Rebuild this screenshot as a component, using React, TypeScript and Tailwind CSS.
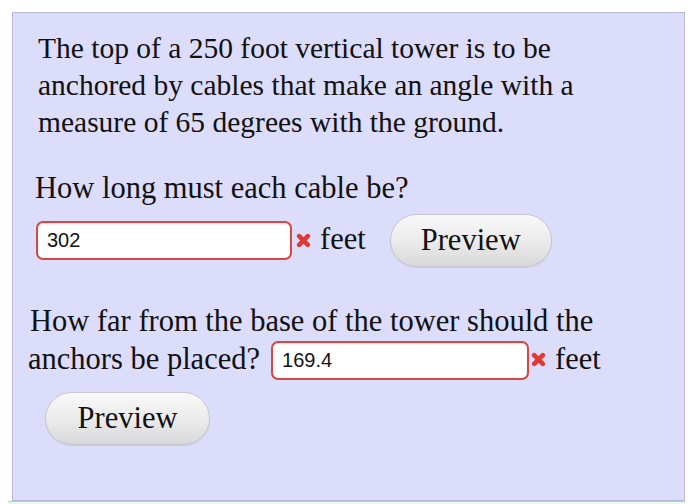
const serif = "font-['Liberation_Serif','Times_New_Roman',serif]";

function CrossMark() {
  return (
    <svg width="15" height="15" viewBox="0 0 15 15" className="shrink-0">
      <path d="M3.2 3.2 L11.8 11.8 M11.8 3.2 L3.2 11.8" stroke="#dc3a34" strokeWidth="4.6" strokeLinecap="round" />
    </svg>
  );
}

function AnswerBox({ value, width }: { value: string; width: string }) {
  return (
    <input
      readOnly
      value={value}
      className={`${width} h-[39px] rounded-[7px] border-2 border-[#d24a44] bg-white pl-[9px] font-['Liberation_Sans',Arial,sans-serif] text-[20px] text-[#111] outline-none shadow-[inset_0_1px_2px_rgba(0,0,0,0.12)]`}
    />
  );
}

function PreviewButton({ width }: { width: string }) {
  return (
    <button
      className={`${width} h-[53px] rounded-full border border-[#c6c6cc] bg-gradient-to-b from-[#f8f8f8] via-[#ececec] to-[#d8d8da] ${serif} text-[30.5px] leading-none text-[#111] shadow-[0_1px_1px_rgba(0,0,0,0.08)]`}
    >
      Preview
    </button>
  );
}

export default function App() {
  return (
    <div className="min-h-[504px] w-[700px] overflow-hidden bg-white">
      <div className="ml-[12px] mt-[12px] h-[489px] w-[673px] border border-[#babad8] bg-[#dcdcfb] text-[#111]">
        <div className={`${serif} text-[30.5px] leading-[37px]`}>
          <p className="ml-[25px] mt-[17px] text-[29.5px]">
            The top of a 250 foot vertical tower is to be
            <br />
            anchored by cables that make an angle with a
            <br />
            measure of 65 degrees with the ground.
          </p>

          <p className="ml-[22px] mt-[29px]">How long must each cable be?</p>

          <div className="ml-[23px] mt-[7px] flex h-[53px] items-center">
            <AnswerBox value="302" width="w-[256px]" />
            <div className="ml-[4px]">
              <CrossMark />
            </div>
            <span className="ml-[9px] -mt-[2px]">feet</span>
            <div className="ml-[24px]">
              <PreviewButton width="w-[162px]" />
            </div>
          </div>

          <p className="ml-[17px] mt-[36px]">How far from the base of the tower should the</p>

          <div className="ml-[15px] flex h-[39px] items-center">
            <span>anchors be placed?</span>
            <div className="ml-[11px]">
              <AnswerBox value="169.4" width="w-[258px]" />
            </div>
            <div className="ml-[2px]">
              <CrossMark />
            </div>
            <span className="ml-[9px]">feet</span>
          </div>

          <div className="ml-[32px] mt-[13px]">
            <PreviewButton width="w-[165px]" />
          </div>
        </div>
      </div>
      <div className="ml-[8px] h-[4px] w-[677px] border-t border-[#c4c4d4] bg-[#e6fbe8]" />
    </div>
  );
}
